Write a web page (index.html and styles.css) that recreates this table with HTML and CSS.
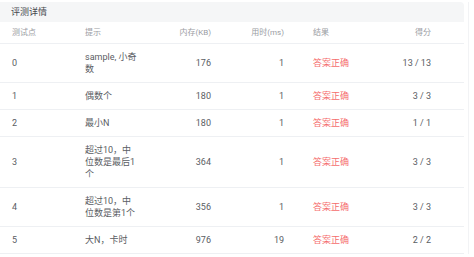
FILE: index.html
```html
<!DOCTYPE html>
<html lang="zh">
<head>
<meta charset="utf-8">
<link rel="stylesheet" href="styles.css">
</head>
<body>
<div class="panel">
  <div class="panel-head">评测详情</div>
  <table class="result-table">
    <colgroup>
      <col class="c-id"><col class="c-hint"><col class="c-mem"><col class="c-time"><col class="c-res"><col class="c-score">
    </colgroup>
    <thead>
      <tr>
        <th class="left">测试点</th>
        <th class="left">提示</th>
        <th class="right">内存(KB)</th>
        <th class="right">用时(ms)</th>
        <th class="res">结果</th>
        <th class="score">得分</th>
      </tr>
    </thead>
    <tbody>
      <tr><td class="left">0</td><td class="left hint">sample, 小奇数</td><td class="right">176</td><td class="right">1</td><td class="res ok">答案正确</td><td class="score">13 / 13</td></tr>
      <tr><td class="left">1</td><td class="left hint">偶数个</td><td class="right">180</td><td class="right">1</td><td class="res ok">答案正确</td><td class="score">3 / 3</td></tr>
      <tr><td class="left">2</td><td class="left hint">最小N</td><td class="right">180</td><td class="right">1</td><td class="res ok">答案正确</td><td class="score">1 / 1</td></tr>
      <tr><td class="left">3</td><td class="left hint">超过10，中位数是最后1个</td><td class="right">364</td><td class="right">1</td><td class="res ok">答案正确</td><td class="score">3 / 3</td></tr>
      <tr><td class="left">4</td><td class="left hint">超过10，中位数是第1个</td><td class="right">356</td><td class="right">1</td><td class="res ok">答案正确</td><td class="score">3 / 3</td></tr>
      <tr><td class="left">5</td><td class="left hint">大N，卡时</td><td class="right">976</td><td class="right">19</td><td class="res ok">答案正确</td><td class="score">2 / 2</td></tr>
    </tbody>
  </table>
</div>
</body>
</html>
```

FILE: styles.css
```css
html, body {
  margin: 0;
  padding: 0;
  background: #ffffff;
}
body {
  font-family: Roboto, "Noto Sans CJK SC", sans-serif;
  color: #606266;
}
.panel {
  margin-top: 2px;
  width: 469px;
  border-right: 1px solid #f2f3f5;
  box-sizing: border-box;
  padding-right: 4px;
}
.panel-head {
  height: 20px;
  line-height: 20px;
  padding-left: 11px;
  font-size: 9px;
  color: #45484e;
  background: #f5f6f7;
  border-radius: 0 4px 0 0;
}
.result-table {
  width: 464px;
  border-collapse: collapse;
  table-layout: fixed;
}
.c-id { width: 73px; }
.c-hint { width: 77px; }
.c-mem { width: 73px; }
.c-time { width: 73px; }
.c-res { width: 89px; }
.c-score { width: 79px; }
.result-table th {
  font-weight: normal;
  font-size: 8px;
  line-height: 11px;
  color: #9a9ca3;
  padding: 5px 12px;
  border-bottom: 1px solid #eef0f3;
}
.result-table td {
  font-size: 9px;
  line-height: 12px;
  color: #5a5d63;
  padding: 7px 12px;
  border-bottom: 1px solid #eef0f3;
  vertical-align: middle;
}
.left { text-align: left; }
.right { text-align: right; }
.res { text-align: left; padding-left: 17px !important; }
.score { text-align: right; padding-right: 33px !important; }
.hint { word-break: break-all; }
.ok { color: #f56c6c !important; }
```
